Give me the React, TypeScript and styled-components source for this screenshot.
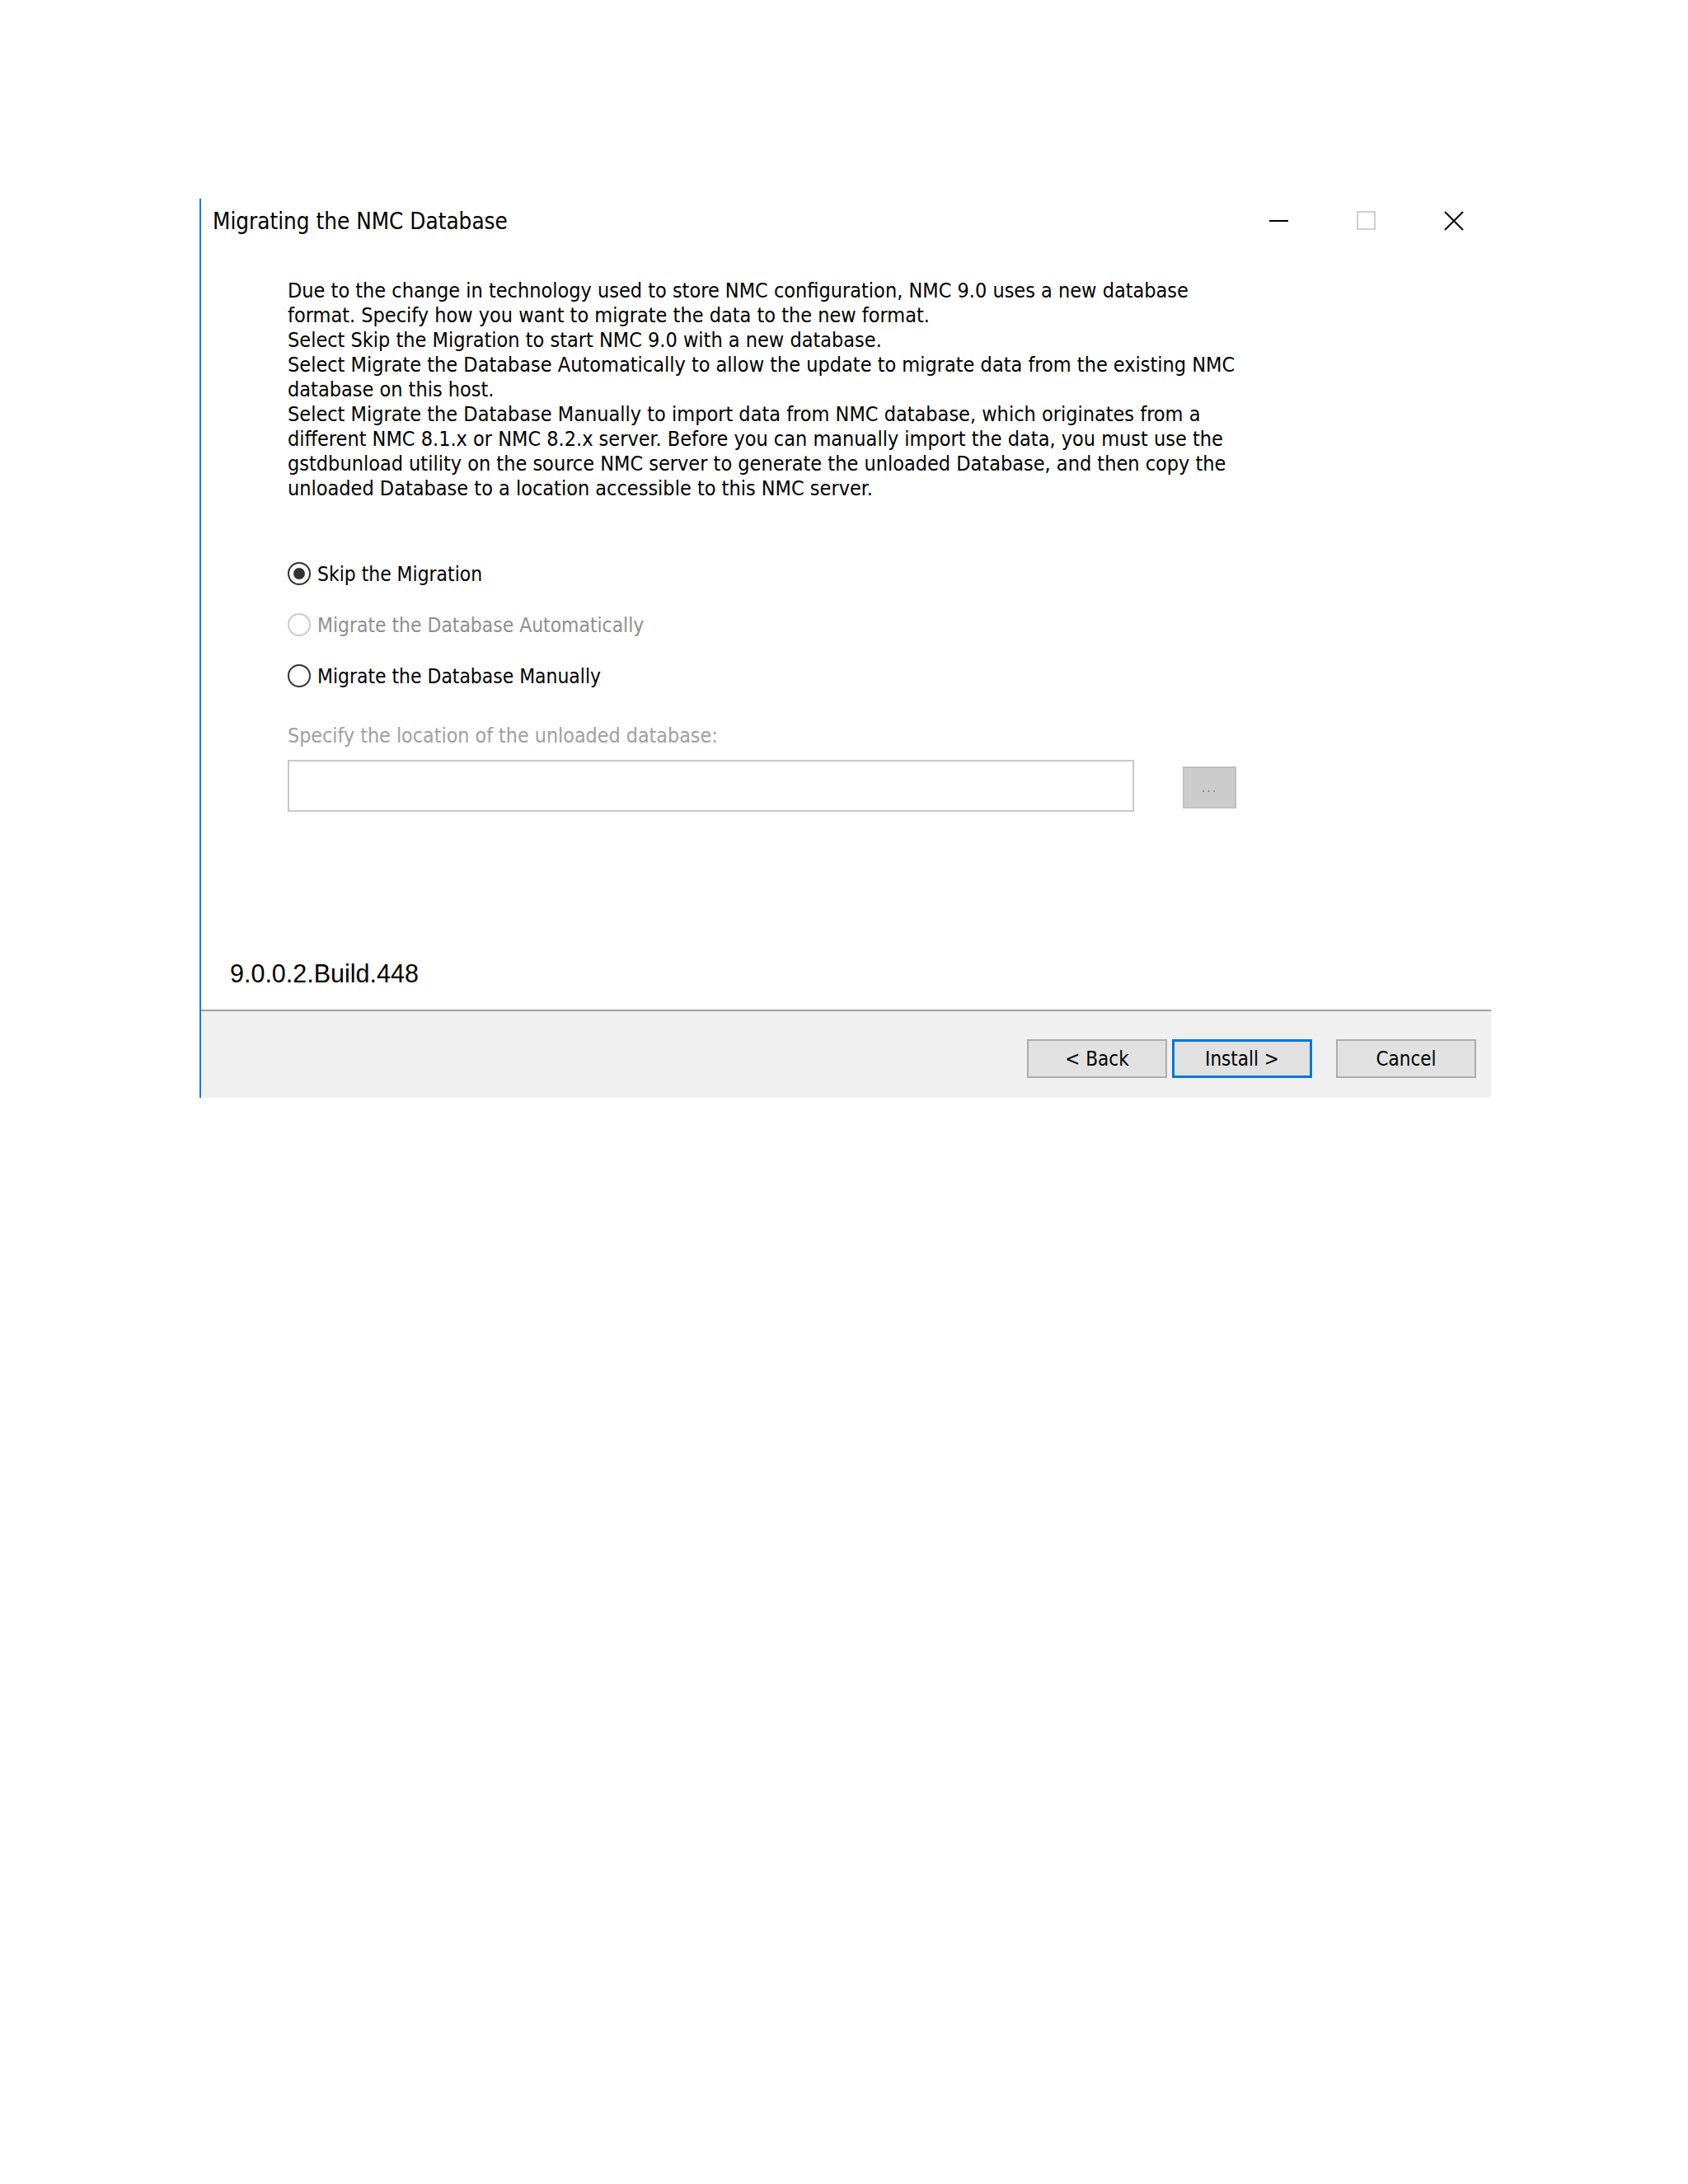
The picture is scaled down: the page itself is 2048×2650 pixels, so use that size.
import styled, { createGlobalStyle } from "styled-components";

const GlobalStyle = createGlobalStyle`
  html, body {
    margin: 0;
    padding: 0;
    background: #ffffff;
  }
  body {
    width: 2048px;
    min-height: 2650px;
  }
`;

const dialogFont = `"DejaVu Sans Condensed", "DejaVu Sans", sans-serif`;

const Page = styled.div`
  padding: 241px 0 0 242px;
`;

const Window = styled.div`
  display: flex;
  flex-direction: column;
  width: 1567px;
  height: 1091px;
  box-sizing: border-box;
  border-left: 2px solid #1a7fd4;
  background: #ffffff;
`;

const TitleBar = styled.div`
  display: flex;
  align-items: center;
  height: 54px;
  padding: 0 33px 0 14px;
`;

const Title = styled.div`
  flex: 1;
  font-family: ${dialogFont};
  font-stretch: condensed;
  font-size: 27.6px;
  color: #000000;
`;

const Controls = styled.div`
  display: flex;
  align-items: center;
  gap: 82px;
`;

const ControlIcon = styled.svg`
  display: block;
  width: 24px;
  height: 24px;
`;

const Content = styled.div`
  flex: 1;
  display: flex;
  flex-direction: column;
  padding: 43px 0 0 105px;
`;

const Intro = styled.div`
  font-family: ${dialogFont};
  font-stretch: condensed;
  font-size: 25px;
  line-height: 30px;
  color: #000000;
`;

const IntroLine = styled.span`
  display: block;
  white-space: nowrap;
`;

const RadioGroup = styled.div`
  display: flex;
  flex-direction: column;
  gap: 22px;
  margin-top: 68px;
`;

const RadioRow = styled.label<{ $disabled?: boolean }>`
  display: flex;
  align-items: center;
  gap: 8px;
  height: 40px;
  font-family: ${dialogFont};
  font-stretch: condensed;
  font-size: 24.4px;
  color: ${({ $disabled }) => ($disabled ? "#8f8f8f" : "#000000")};
`;

const RadioCircle = styled.span<{ $checked?: boolean; $disabled?: boolean }>`
  display: flex;
  align-items: center;
  justify-content: center;
  width: 28px;
  height: 28px;
  box-sizing: border-box;
  border-radius: 50%;
  border: 2px solid ${({ $disabled }) => ($disabled ? "#cccccc" : "#333333")};
  background: #ffffff;

  &::after {
    content: "";
    display: ${({ $checked }) => ($checked ? "block" : "none")};
    width: 14px;
    height: 14px;
    border-radius: 50%;
    background: #333333;
  }
`;

const FieldLabel = styled.div`
  margin-top: 39px;
  font-family: ${dialogFont};
  font-stretch: condensed;
  font-size: 24.8px;
  line-height: 28px;
  color: #a0a0a0;
`;

const FieldRow = styled.div`
  display: flex;
  align-items: center;
  gap: 59px;
  margin-top: 15px;
`;

const PathInput = styled.div`
  width: 1027px;
  height: 63px;
  box-sizing: border-box;
  border: 2px solid #c8c8c8;
  background: #ffffff;
`;

const BrowseButton = styled.div`
  display: flex;
  align-items: center;
  justify-content: center;
  width: 65px;
  height: 51px;
  margin-top: 4px;
  box-sizing: border-box;
  border: 2px solid #bfbfbf;
  background: #cccccc;
  font-family: ${dialogFont};
  font-size: 16px;
  color: #7a7a7a;
  letter-spacing: 2px;
`;

const Version = styled.div`
  padding: 0 0 26px 35px;
  font-family: "Liberation Sans", Arial, sans-serif;
  font-size: 30.5px;
  line-height: 36px;
  color: #000000;
`;

const Footer = styled.div`
  display: flex;
  justify-content: flex-end;
  align-items: flex-start;
  height: 107px;
  box-sizing: border-box;
  padding: 34px 18px 0 0;
  border-top: 2px solid #a0a0a0;
  background: #f0f0f0;
`;

const FooterButton = styled.div<{ $primary?: boolean; $gapLeft?: number }>`
  display: flex;
  align-items: center;
  justify-content: center;
  width: 170px;
  height: 47px;
  box-sizing: border-box;
  margin-left: ${({ $gapLeft }) => $gapLeft ?? 0}px;
  border: ${({ $primary }) => ($primary ? "3px solid #0078d7" : "2px solid #adadad")};
  background: #e1e1e1;
  font-family: ${dialogFont};
  font-stretch: condensed;
  font-size: 24px;
  color: #000000;
`;

const introLines = [
  "Due to the change in technology used to store NMC configuration, NMC 9.0 uses a new database",
  "format. Specify how you want to migrate the data to the new format.",
  "Select Skip the Migration to start NMC 9.0 with a new database.",
  "Select Migrate the Database Automatically to allow the update to migrate data from the existing NMC",
  "database on this host.",
  "Select Migrate the Database Manually to import data from NMC database, which originates from a",
  "different NMC 8.1.x or NMC 8.2.x server. Before you can manually import the data, you must use the",
  "gstdbunload utility on the source NMC server to generate the unloaded Database, and then copy the",
  "unloaded Database to a location accessible to this NMC server.",
];

const options = [
  { label: "Skip the Migration", checked: true, disabled: false },
  { label: "Migrate the Database Automatically", checked: false, disabled: true },
  { label: "Migrate the Database Manually", checked: false, disabled: false },
];

const App = () => {
  return (
    <>
      <GlobalStyle />
      <Page>
        <Window>
          <TitleBar>
            <Title>Migrating the NMC Database</Title>
            <Controls>
              <ControlIcon viewBox="0 0 24 24">
                <rect x="0" y="11" width="23" height="2" fill="#000" />
              </ControlIcon>
              <ControlIcon viewBox="0 0 24 24">
                <rect x="1" y="1" width="21" height="21" fill="none" stroke="#cfcfcf" strokeWidth="2" />
              </ControlIcon>
              <ControlIcon viewBox="0 0 24 24">
                <path d="M1 1 L23 23 M23 1 L1 23" stroke="#000" strokeWidth="2" fill="none" />
              </ControlIcon>
            </Controls>
          </TitleBar>

          <Content>
            <Intro>
              {introLines.map((line, i) => (
                <IntroLine key={i}>{line}</IntroLine>
              ))}
            </Intro>

            <RadioGroup>
              {options.map((opt) => (
                <RadioRow key={opt.label} $disabled={opt.disabled}>
                  <RadioCircle $checked={opt.checked} $disabled={opt.disabled} />
                  {opt.label}
                </RadioRow>
              ))}
            </RadioGroup>

            <FieldLabel>Specify the location of the unloaded database:</FieldLabel>
            <FieldRow>
              <PathInput />
              <BrowseButton>...</BrowseButton>
            </FieldRow>
          </Content>

          <Version>9.0.0.2.Build.448</Version>

          <Footer>
            <FooterButton>&lt; Back</FooterButton>
            <FooterButton $primary $gapLeft={6}>Install &gt;</FooterButton>
            <FooterButton $gapLeft={29}>Cancel</FooterButton>
          </Footer>
        </Window>
      </Page>
    </>
  );
};

export default App;
